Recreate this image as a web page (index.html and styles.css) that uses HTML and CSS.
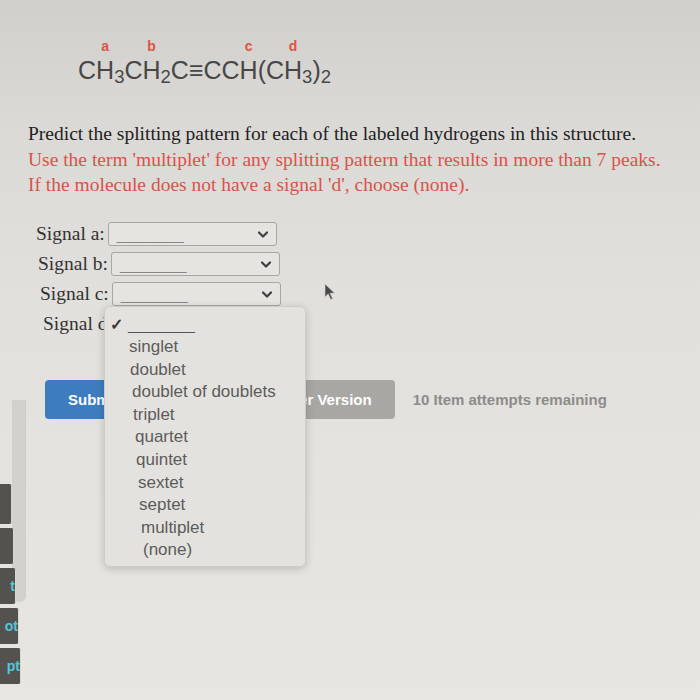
FILE: index.html
```html
<!DOCTYPE html>
<html>
<head>
<meta charset="utf-8">
<link rel="stylesheet" href="styles.css">
</head>
<body>
<div class="screen">
  <aside class="rail">
    <div class="scroll"></div>
    <div class="tabs">
      <div class="tab t1"></div>
      <div class="tab t2"></div>
      <div class="tab t3">t</div>
      <div class="tab t4">ot</div>
      <div class="tab t5">pt</div>
    </div>
  </aside>
  <main class="content">
    <div class="formula">C<ruby>H<rt>a</rt></ruby><sub>3</sub>C<ruby>H<rt>b</rt></ruby><sub>2</sub>C≡CC<ruby>H<rt>c</rt></ruby>(C<ruby>H<rt>d</rt></ruby><sub>3</sub>)<sub>2</sub></div>
    <div class="prompt">
      <p>Predict the splitting pattern for each of the labeled hydrogens in this structure.</p>
      <p class="red">Use the term 'multiplet' for any splitting pattern that results in more than 7 peaks.</p>
      <p class="red">If the molecule does not have a signal 'd', choose (none).</p>
    </div>
    <div class="signals">
      <div class="row"><span class="lbl">Signal a:</span><span class="select"><span class="blank">________</span><svg class="chev" viewBox="0 0 10 6"><path d="M1 1 L5 5 L9 1" /></svg></span></div>
      <div class="row"><span class="lbl">Signal b:</span><span class="select"><span class="blank">________</span><svg class="chev" viewBox="0 0 10 6"><path d="M1 1 L5 5 L9 1" /></svg></span></div>
      <div class="row"><span class="lbl">Signal c:</span><span class="select"><span class="blank">________</span><svg class="chev" viewBox="0 0 10 6"><path d="M1 1 L5 5 L9 1" /></svg></span></div>
      <div class="row"><span class="lbl">Signal d:</span></div>
    </div>
    <div class="actions">
      <button class="btn submit">Submit Answer</button>
      <button class="btn other">Try Another Version</button>
      <span class="attempts">10 Item attempts remaining</span>
    </div>
  </main>
  <div class="menu">
    <div class="current"><span class="check">✓</span><span class="cblank">________</span></div>
    <ul class="options">
      <li>singlet</li>
      <li>doublet</li>
      <li>doublet of doublets</li>
      <li>triplet</li>
      <li>quartet</li>
      <li>quintet</li>
      <li>sextet</li>
      <li>septet</li>
      <li>multiplet</li>
      <li>(none)</li>
    </ul>
  </div>
  <svg class="cursor" viewBox="0 0 12 18"><path d="M1 1 L1 14 L4.2 11 L6.8 16.5 L8.6 15.6 L6.1 10.3 L10.5 10.1 Z" /></svg>
</div>
</body>
</html>
```

FILE: styles.css
```css
html, body {
  margin: 0;
  padding: 0;
}
body {
  width: 700px;
  height: 700px;
  overflow: hidden;
  background: linear-gradient(180deg, #d1cfcc 0px, #dbd9d5 120px, #e2e0dc 300px, #e8e6e1 700px);
}
.screen {
  position: relative;
  display: grid;
  grid-template-columns: 26px 1fr;
  height: 700px;
}
.rail {
  display: grid;
  grid-template-columns: 12px 14px;
  grid-template-rows: 1fr;
}
.scroll {
  grid-column: 2;
  grid-row: 1;
  margin-top: 400px;
  height: 202px;
  width: 14px;
  background: #d3d1cd;
  border-radius: 0 0 8px 8px;
  box-shadow: inset -1px 0 0 #cfcdc9;
}
.tabs {
  grid-column: 1;
  grid-row: 1;
  margin-top: 484px;
  display: flex;
  flex-direction: column;
  gap: 4px;
}
.tab {
  height: 36px;
  background: #54524f;
  border-right: 1px solid #d8d6d2;
  border-radius: 0 2px 2px 0;
  color: #55c6dc;
  font: bold 14px "Liberation Sans", Arial, sans-serif;
  display: flex;
  align-items: center;
  justify-content: flex-end;
  overflow: hidden;
}
.t1 { width: 11px; height: 40px; }
.t2 { width: 13px; }
.t3 { width: 15px; }
.t4 { width: 18px; }
.t5 { width: 20px; }

.content {
  display: flex;
  flex-direction: column;
  align-items: flex-start;
}
.formula {
  margin: 38px 0 0 52px;
  font: 25px "Liberation Sans", Arial, sans-serif;
  line-height: 30px;
  color: #474747;
}
.formula sub {
  font-size: 0.74em;
  vertical-align: -0.22em;
  line-height: 0;
}
.formula rt {
  font: bold 14px "Liberation Sans", Arial, sans-serif;
  color: #dd5448;
  line-height: 20px;
  padding-bottom: 5px;
}
.prompt {
  margin: 36px 0 0 2px;
  font: 19.5px "Liberation Serif", "Times New Roman", serif;
  line-height: 25.5px;
  color: #222;
}
.prompt p {
  margin: 0;
}
.prompt .red {
  color: #d9534a;
}
.signals {
  margin: 24px 0 0 10px;
  display: flex;
  flex-direction: column;
  gap: 5px;
}
.row {
  display: flex;
  align-items: center;
  gap: 3px;
  height: 25px;
}
.row:nth-child(2) { padding-left: 2px; }
.row:nth-child(3) { padding-left: 4px; }
.row:nth-child(4) { padding-left: 7px; }
.lbl {
  font: 19.5px "Liberation Serif", "Times New Roman", serif;
  color: #333;
}
.select {
  width: 169px;
  height: 24px;
  border: 1px solid #a8a6a2;
  border-radius: 3px;
  background: #e6e4e0;
  display: flex;
  align-items: flex-end;
  justify-content: space-between;
  padding: 0 8px 0 8px;
  box-sizing: border-box;
}
.blank {
  font: 15px "Liberation Sans", Arial, sans-serif;
  color: #8a8885;
  line-height: 20px;
}
.chev {
  width: 10px;
  height: 7px;
  align-self: center;
  fill: none;
  stroke: #3e3e3e;
  stroke-width: 2.2;
  stroke-linecap: round;
  stroke-linejoin: round;
}
.actions {
  margin: 43px 0 0 19px;
  display: flex;
  align-items: center;
}
.btn {
  height: 39px;
  border: none;
  border-radius: 4px;
  color: #fff;
  font: bold 15px "Liberation Sans", Arial, sans-serif;
  padding: 0 23px;
}
.submit {
  background: #3d7dbf;
}
.other {
  background: #a9a7a4;
  margin-left: 7px;
}
.attempts {
  margin-left: 18px;
  font: bold 15px "Liberation Sans", Arial, sans-serif;
  color: #8d8c8a;
}
.menu {
  position: absolute;
  left: 104px;
  top: 306px;
  width: 202px;
  height: 261px;
  box-sizing: border-box;
  background: #e4e2de;
  border: 1px solid #cfcdc9;
  border-radius: 6px;
  box-shadow: 0 2px 8px rgba(0, 0, 0, 0.18);
  font: 17px "Liberation Sans", Arial, sans-serif;
  color: #5c5c5c;
  padding-top: 6px;
}
.current {
  display: flex;
  align-items: center;
  height: 22px;
  padding-left: 5px;
  gap: 5px;
  color: #3a3a3a;
}
.check {
  font-size: 16px;
  font-weight: bold;
}
.cblank {
  color: #555;
  font-size: 15px;
}
.options {
  list-style: none;
  margin: 0;
  padding: 1px 0 0 24px;
}
.options li {
  height: 22.6px;
  line-height: 22.6px;
}
.options li:nth-child(2) { padding-left: 1px; }
.options li:nth-child(3) { padding-left: 3px; }
.options li:nth-child(4) { padding-left: 4px; }
.options li:nth-child(5) { padding-left: 6px; }
.options li:nth-child(6) { padding-left: 7px; }
.options li:nth-child(7) { padding-left: 9px; }
.options li:nth-child(8) { padding-left: 10px; }
.options li:nth-child(9) { padding-left: 12px; }
.options li:nth-child(10) { padding-left: 14px; }
.cursor {
  position: absolute;
  left: 324px;
  top: 283px;
  width: 12px;
  height: 18px;
  fill: #4a4a4a;
  stroke: #d0d0d0;
  stroke-width: 0.6;
}
```
